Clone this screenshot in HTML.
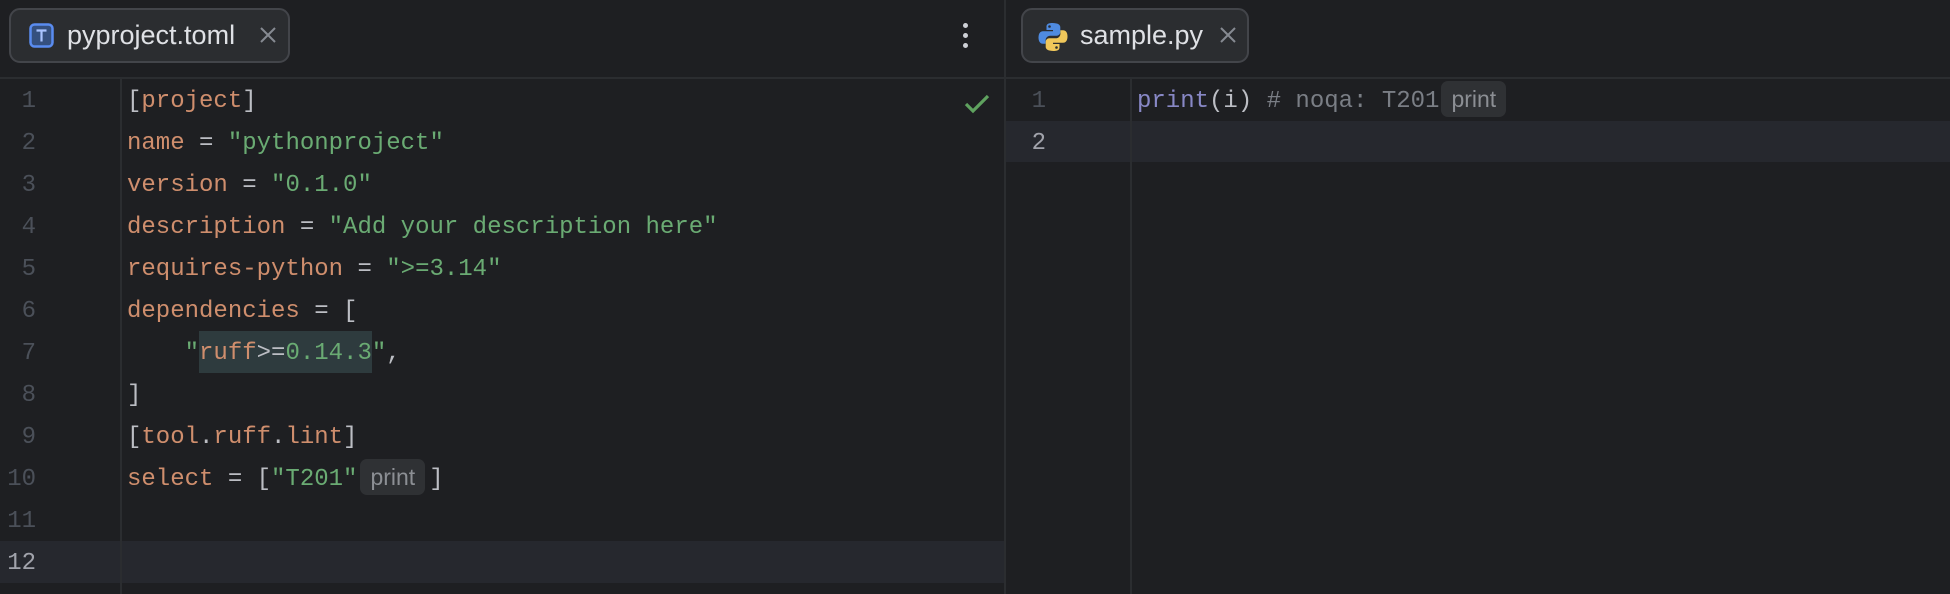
<!DOCTYPE html>
<html><head><meta charset="utf-8"><style>
*{margin:0;padding:0;box-sizing:border-box}
body{width:1950px;height:594px;background:#1e1f22;position:relative;overflow:hidden;font-family:"Liberation Sans",sans-serif}
.hline{position:absolute;left:0;top:77px;width:1950px;height:2px;background:#2b2d30}
.vsplit{position:absolute;left:1004px;top:0;width:2px;height:594px;background:#2b2d30}
.tab{position:absolute;top:8px;height:55px;background:#2b2d30;border:2px solid #43454a;border-radius:11px;color:#dfe1e5;font-size:27px;line-height:51px}
.tab .x{position:absolute;top:16px}
.gut{position:absolute;top:79px;width:2px;height:515px;background:#2b2d30}
.row{position:absolute;height:42px;line-height:46px;font-family:"Liberation Mono",monospace;font-size:24px;white-space:pre;color:#bcbec4}
.ln{position:absolute;height:42px;line-height:46px;font-family:"Liberation Mono",monospace;font-size:24px;color:#4b5059;text-align:right;width:36px}
.cur{background:#26282e}
.k{color:#cf8e6d}.s{color:#6aab73}.c{color:#7a7e85}.f{color:#8888c6}
.sel{background:#2e3b3e;display:inline-block;height:42px;vertical-align:top}
.inl{display:inline-block;background:#2f3134;color:#8c8f94;font-family:"Liberation Sans",sans-serif;font-size:23px;line-height:36px;height:36px;border-radius:7px;padding:0 10px;vertical-align:top;margin-top:2px}
</style></head><body>
<div class="hline"></div>
<div class="vsplit"></div>

<div class="tab" style="left:9px;width:281px">
  <svg style="position:absolute;left:18px;top:13px" width="25" height="25" viewBox="0 0 25 25"><rect x="1.5" y="1.5" width="22" height="22" rx="4" fill="#35507f" stroke="#5a8cf0" stroke-width="2.5"/><path d="M7.5 7.5h10M12.5 7.5v11" stroke="#a9c3ff" stroke-width="2.2" fill="none"/></svg>
  <span style="position:absolute;left:56px;top:0">pyproject.toml</span>
  <svg class="x" style="left:248px" width="18" height="18" viewBox="0 0 18 18"><path d="M2 2l14 14M16 2L2 16" stroke="#868a91" stroke-width="2"/></svg>
</div>
<div style="position:absolute;left:963px;top:23px;width:5px;height:5px;border-radius:50%;background:#ced0d6"></div>
<div style="position:absolute;left:963px;top:33px;width:5px;height:5px;border-radius:50%;background:#ced0d6"></div>
<div style="position:absolute;left:963px;top:43px;width:5px;height:5px;border-radius:50%;background:#ced0d6"></div>
<svg style="position:absolute;left:964px;top:94px" width="26" height="20" viewBox="0 0 26 20"><path d="M2 10l7 7L24 2" stroke="#5fa25f" stroke-width="3.2" fill="none"/></svg>

<div class="tab" style="left:1021px;width:228px">
  <svg style="position:absolute;left:15px;top:12px" width="30" height="30" viewBox="0 0 30 30">
    <path d="M14.5 1c-6 0-6 2.5-6 4v3h6.5v1.2H5c-3 0-4.5 2.6-4.5 6.3s1.5 6.3 4.5 6.3h2.6v-3.5c0-2.6 2.2-4.6 4.6-4.6h6.5c2 0 3.6-1.7 3.6-3.7V5c0-2.2-2.6-4-7.8-4z" fill="#4f8be0"/>
    <circle cx="11.5" cy="4.5" r="1.3" fill="#2b2d30"/>
    <path d="M15.5 29c6 0 6-2.5 6-4v-3H15v-1.2h10c3 0 4.5-2.6 4.5-6.3s-1.5-6.3-4.5-6.3h-2.6v3.5c0 2.6-2.2 4.6-4.6 4.6h-6.5c-2 0-3.6 1.7-3.6 3.7V25c0 2.2 2.6 4 7.8 4z" fill="#f0c75a"/>
    <circle cx="18.5" cy="25.5" r="1.3" fill="#2b2d30"/>
  </svg>
  <span style="position:absolute;left:57px;top:0">sample.py</span>
  <svg class="x" style="left:196px" width="18" height="18" viewBox="0 0 18 18"><path d="M2 2l14 14M16 2L2 16" stroke="#868a91" stroke-width="2"/></svg>
</div>

<div class="cur" style="position:absolute;left:0;top:541px;width:1004px;height:42px"></div>
<div class="gut" style="left:120px"></div>
<div class="ln" style="left:0;top:79px">1</div>
<div class="ln" style="left:0;top:121px">2</div>
<div class="ln" style="left:0;top:163px">3</div>
<div class="ln" style="left:0;top:205px">4</div>
<div class="ln" style="left:0;top:247px">5</div>
<div class="ln" style="left:0;top:289px">6</div>
<div class="ln" style="left:0;top:331px">7</div>
<div class="ln" style="left:0;top:373px">8</div>
<div class="ln" style="left:0;top:415px">9</div>
<div class="ln" style="left:0;top:457px">10</div>
<div class="ln" style="left:0;top:499px">11</div>
<div class="ln" style="left:0;top:541px;color:#a1a3ab">12</div>

<div class="row" style="left:127px;top:79px">[<span class="k">project</span>]</div>
<div class="row" style="left:127px;top:121px"><span class="k">name</span> = <span class="s">"pythonproject"</span></div>
<div class="row" style="left:127px;top:163px"><span class="k">version</span> = <span class="s">"0.1.0"</span></div>
<div class="row" style="left:127px;top:205px"><span class="k">description</span> = <span class="s">"Add your description here"</span></div>
<div class="row" style="left:127px;top:247px"><span class="k">requires-python</span> = <span class="s">"&gt;=3.14"</span></div>
<div class="row" style="left:127px;top:289px"><span class="k">dependencies</span> = [</div>
<div class="row" style="left:127px;top:331px">    <span class="s">"</span><span class="sel"><span class="k">ruff</span>&gt;=<span class="s">0.14.3</span></span><span class="s">"</span>,</div>
<div class="row" style="left:127px;top:373px">]</div>
<div class="row" style="left:127px;top:415px">[<span class="k">tool</span>.<span class="k">ruff</span>.<span class="k">lint</span>]</div>
<div class="row" style="left:127px;top:457px"><span class="k">select</span> = [<span class="s">"T201"</span><span class="inl" style="margin-left:3px;margin-right:4px">print</span>]</div>

<div class="cur" style="position:absolute;left:1006px;top:121px;width:944px;height:41px"></div>
<div class="gut" style="left:1130px"></div>
<div class="ln" style="left:1010px;top:79px">1</div>
<div class="ln" style="left:1010px;top:121px;color:#a1a3ab">2</div>
<div class="row" style="left:1137px;top:79px"><span class="f">print</span>(i) <span class="c"># noqa: T201</span><span class="inl" style="margin-left:2px">print</span></div>
</body></html>
